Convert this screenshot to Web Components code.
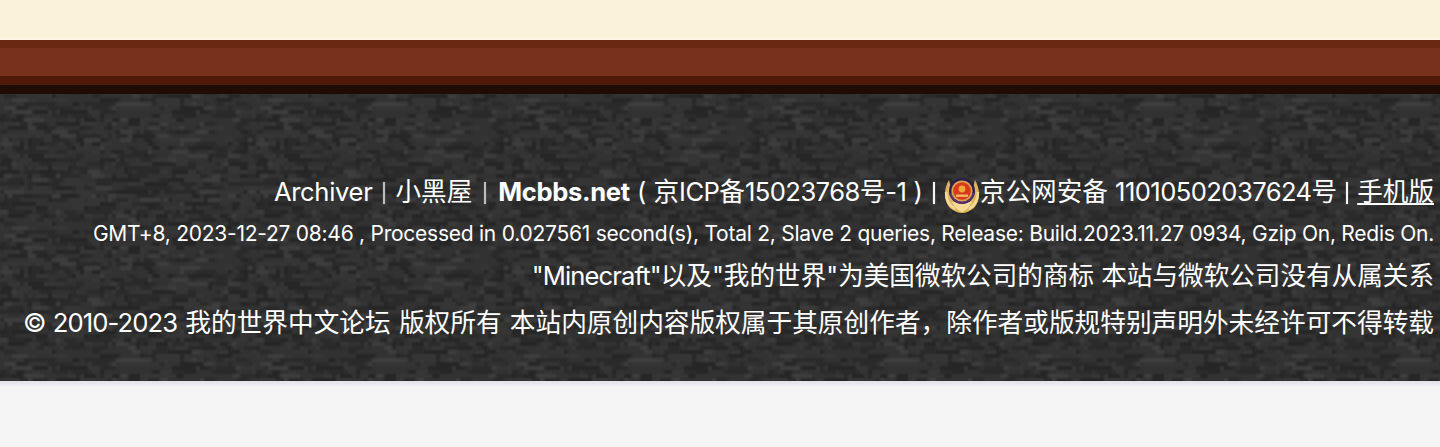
<!DOCTYPE html>
<html lang="zh-CN"><head><meta charset="utf-8"><style>
html,body{margin:0;padding:0;background:#f5f5f6}
body{font-family:"Inter","Noto Sans CJK SC",sans-serif;height:447px;overflow:hidden}
.n{letter-spacing:-.57px}
.m{letter-spacing:-.9px}
.y{letter-spacing:-.95px}
.a{letter-spacing:-.34px}
</style></head><body>
<mc-footer>
<mc-line size="25.6" h="42"><span class="a">Archiver</span><mc-sep tone="dim" gap="10.5"></mc-sep>小黑屋<mc-sep tone="dim" gap="12"></mc-sep><b class="a">Mcbbs.net</b> ( 京<span class="n">ICP</span>备<span class="n">15023768</span>号<span class="n">-1</span> )<mc-sep></mc-sep><mc-badge></mc-badge>京公网安备 <span class="n">11010502037624</span>号<mc-sep gap="9"></mc-sep><u>手机版</u></mc-line>
<mc-line size="21" h="42" track="-.25">GMT+8, 2023-12-27 08:46 , Processed in 0.027561 second(s), Total 2, Slave 2 queries, Release: Build.2023.11.27 0934, Gzip On, Redis On.</mc-line>
<mc-line size="25.6" h="42"><span class="m">"Minecraft"</span>以及"我的世界"为美国微软公司的商标 本站与微软公司没有从属关系</mc-line>
<mc-line size="25.68" h="52" words="1"><span class="y">© 2010-2023</span> 我的世界中文论坛 版权所有 本站内原创内容版权属于其原创作者，除作者或版规特别声明外未经许可不得转载</mc-line>
</mc-footer>
<script>
function rng(s){return()=>(s=(s*1664525+1013904223)>>>0)/4294967296}
function tile(){
  const r=rng(77),W=256,H=128;let o='';
  for(let y=0;y<H;y+=4){let x=0;while(x<W){
    const w=Math.min(W-x,4*(1+Math.floor(r()*r()*6)));const t=r();
    const c=t<.15?'#252525':t<.4?'#2b2b2b':t<.72?'#303030':t<.92?'#363636':'#3d3d3d';
    o+=`<rect x="${x}" y="${y}" width="${w}" height="4" fill="${c}"/>`;x+=w}}
  let u='';for(const dx of[-W,0,W])for(const dy of[-H,0,H])u+=`<g transform="translate(${dx} ${dy})">${o}</g>`;
  const svg=`<svg xmlns="http://www.w3.org/2000/svg" width="${W}" height="${H}"><filter id="b" filterUnits="userSpaceOnUse" x="${-W}" y="${-H}" width="${3*W}" height="${3*H}"><feGaussianBlur stdDeviation="1"/></filter><g filter="url(#b)">${u}</g></svg>`;
  return `url("data:image/svg+xml,${encodeURIComponent(svg)}")`;
}
const TEX=tile();
customElements.define('mc-footer',class extends HTMLElement{constructor(){super();
this.attachShadow({mode:'open'}).innerHTML=`<style>
:host{display:block;color:#fff}
.cream{height:40px;background:#fbf2dc;box-shadow:inset 0 -2px 0 #fdf5e4}
.wood{height:54px;background:linear-gradient(#6a2812 0 8px,#78321c 8px 36px,#4f1b08 36px 45px,#1f0d03 45px)}
.stone{height:287px;box-sizing:border-box;padding:77px 6px 0 0;text-align:right;background:#303030 ${TEX}}
.edge{height:5px;background:linear-gradient(#e1e2ea,#eeeef3)}
</style><div class="cream"></div><div class="wood"></div><div class="stone"><slot></slot></div><div class="edge"></div>`}});
customElements.define('mc-line',class extends HTMLElement{constructor(){super();
const s=this.getAttribute('size'),h=this.getAttribute('h'),t=this.getAttribute('track')||0,w=this.getAttribute('words')||0;
this.attachShadow({mode:'open'}).innerHTML=`<style>:host{display:block;white-space:nowrap;font-size:${s}px;line-height:${h}px;height:${h}px;letter-spacing:${t}px;word-spacing:${w}px}</style><slot></slot>`}});
customElements.define('mc-sep',class extends HTMLElement{constructor(){super();
const dim=this.getAttribute('tone')==='dim',c=dim?'#bdbdbd':'#f4f4f4',g=this.getAttribute('gap')||(dim?11:10);
this.attachShadow({mode:'open'}).innerHTML=`<style>:host{display:inline-block;width:2px;height:22px;background:${c};box-shadow:0 0 1px ${c};vertical-align:-3px;margin:0 ${g}px}</style>`}});
customElements.define('mc-badge',class extends HTMLElement{constructor(){super();
this.attachShadow({mode:'open'}).innerHTML=`<style>:host{display:inline-block;width:36px;height:38px;vertical-align:-13px;margin-left:-1px}svg{display:block}</style>
<svg width="36" height="38" viewBox="0 0 36 38"><defs><filter id="s" x="-10%" y="-10%" width="120%" height="120%"><feGaussianBlur stdDeviation=".6"/></filter></defs><g filter="url(#s)">
<path d="M5 4C0 12-1 25 6 32c4 3 8 5 12 5s8-2 12-5c7-7 6-20 1-28l-5 20H10z" fill="#dfb45c"/>
<path d="M8 26c3 6 7 9 10 10 3-1 7-4 10-10z" fill="#f4dc98"/>
<path d="M2 16c0 8 4 14 9 17" stroke="#f5dc9a" stroke-width="2.4" fill="none"/><path d="M34 16c0 8-4 14-9 17" stroke="#f5dc9a" stroke-width="2.4" fill="none"/>
<circle cx="18" cy="15" r="13" fill="#2a1f4e"/><path d="M5.5 17a12.6 12.6 0 0 0 25 0z" fill="#5a2f72"/>
<circle cx="18" cy="15" r="10.6" fill="#d8a24c"/>
<circle cx="18" cy="15" r="8.8" fill="#d9391b"/>
<circle cx="18" cy="13" r="3.4" fill="#f0a838"/><rect x="12" y="18.5" width="12" height="2.4" fill="#efb85a"/></g></svg>`}});
</script></body></html>
